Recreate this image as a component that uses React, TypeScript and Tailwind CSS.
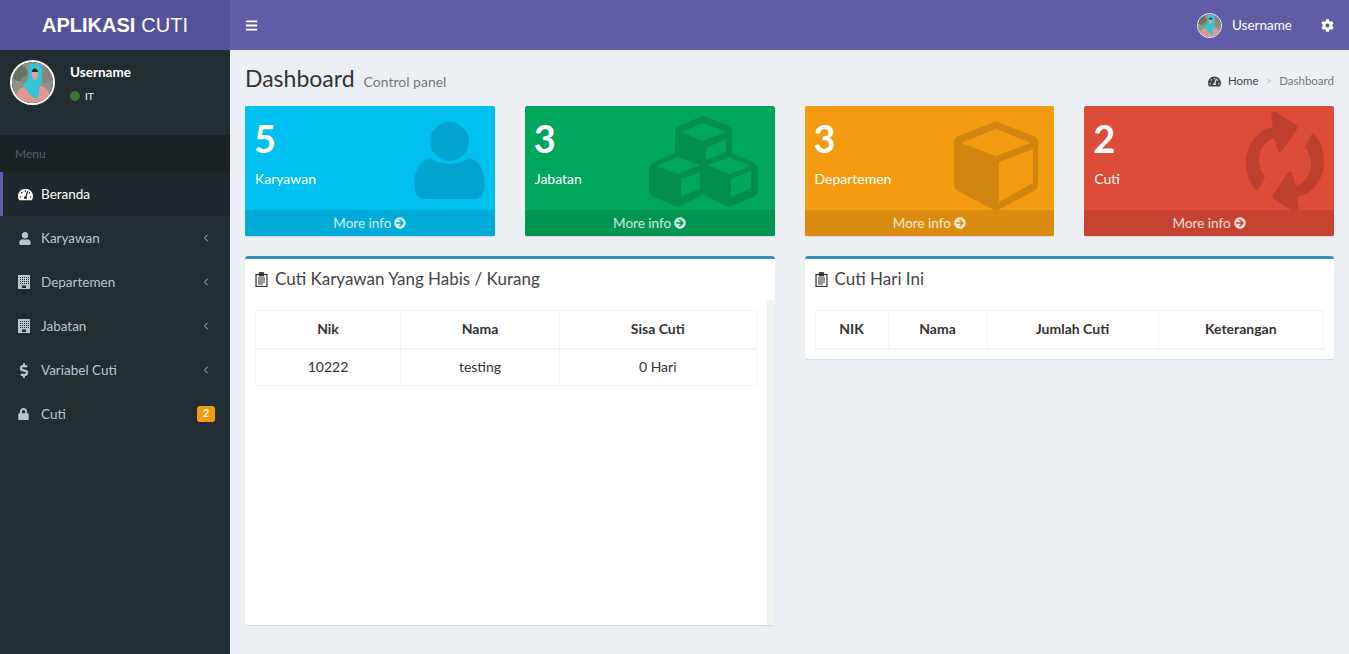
import React from "react";
import { FaBars, FaCog, FaUser, FaDollarSign, FaLock, FaArrowCircleRight, FaTachometerAlt } from "react-icons/fa";
import { ChevronLeft } from "lucide-react";

const Avatar = ({ className, id }: { className: string; id: string }) => (
  <svg viewBox="0 0 45 45" className={className}>
    <defs>
      <clipPath id={id}><circle cx="22.5" cy="22.5" r="22.5" /></clipPath>
    </defs>
    <g clipPath={`url(#${id})`}>
      <rect width="45" height="45" fill="#8f948a" />
      <circle cx="8" cy="12" r="9" fill="#65755f" />
      <circle cx="15" cy="20" r="5" fill="#7f8a74" />
      <circle cx="38" cy="14" r="9" fill="#8c827e" />
      <path d="M3 45 C4 34 7 29 14 27 L32 26 C39 28 42 34 43 45 Z" fill="#e2968f" />
      <path d="M20 2 L30 2 C33 6 34 11 33 15 C34 20 32 24 30 28 C30 33 29 37 28 41 C24 39 21 37 19 35 C17 31 14 28 12 25 C15 22 18 19 19 14 C18 9 19 5 20 2 Z" fill="#35c3d8" />
      <path d="M22 9 C24 7 28 8 28.500 11 C29 15 27 20 25 20 C23 20 21 15 22 9 Z" fill="#dca491" />
      <path d="M22 9 C24 6 28 7 28.500 11 L22 11 Z" fill="#2a2528" />
    </g>
  </svg>
);

const BuildingIcon = () => (
  <svg viewBox="0 0 12 14" className="w-[12px] h-[14px] mr-[11px] shrink-0" fill="currentColor" fillRule="evenodd">
    <path d="M0 0 H12 V14 H0 Z
    M2 2 H3 V3 H2 Z M4 2 H5 V3 H4 Z M6 2 H7 V3 H6 Z M8 2 H9 V3 H8 Z M10 2 H11 V3 H10 Z
    M2 4 H3 V5 H2 Z M4 4 H5 V5 H4 Z M6 4 H7 V5 H6 Z M8 4 H9 V5 H8 Z M10 4 H11 V5 H10 Z
    M2 6 H3 V7 H2 Z M4 6 H5 V7 H4 Z M6 6 H7 V7 H6 Z M8 6 H9 V7 H8 Z M10 6 H11 V7 H10 Z
    M2 8 H3 V9 H2 Z M4 8 H5 V9 H4 Z M6 8 H7 V9 H6 Z M8 8 H9 V9 H8 Z M10 8 H11 V9 H10 Z
    M4 10.500 H8 V13 H4 Z" />
  </svg>
);

const ClipboardIcon = () => (
  <svg viewBox="0 0 13 15" className="w-[13px] h-[15px] mr-[7px] shrink-0" fill="none" stroke="#333" strokeWidth="1.2">
    <rect x="1" y="2.500" width="11" height="12" />
    <rect x="4.500" y="0.800" width="4" height="3" fill="#333" />
    <path d="M3 6 H10 M3 8 H10 M3 10 H10 M3 12 H8" />
  </svg>
);

const menu = [
  { label: "Karyawan", icon: <FaUser className="w-[14px] text-[13px] mr-[9px] shrink-0" /> },
  { label: "Departemen", icon: <BuildingIcon /> },
  { label: "Jabatan", icon: <BuildingIcon /> },
  { label: "Variabel Cuti", icon: <FaDollarSign className="w-[12px] text-[15px] mr-[11px] shrink-0" /> },
];

const PersonIcon = () => (
  <svg viewBox="0 0 72 80" className="w-[71px] h-[78px]" fill="currentColor">
    <circle cx="36" cy="20" r="20" />
    <path d="M17 37 C24 45 48 45 55 37 C64 38 72 46 72 64 C72 74 68 79 60 79 L12 79 C4 79 0 74 0 64 C0 46 8 38 17 37 Z" />
  </svg>
);

const CubesIcon = () => (
  <svg viewBox="0 0 109 91" className="w-[109px] h-[91px]" fill="currentColor" fillRule="evenodd">
    <path d="M52 0.500 Q54 0 56 0.500 L79 10 Q83 12 83 15 L83 37 L105 47 Q109 49 109 53 L109 75 Q109 78 106 80 L83 90 Q80 91 77 90 L54 78 L32 90 Q29 91 26 90 L3 80 Q0 78 0 75 L0 53 Q0 49 4 47 L26 37 L26 15 Q26 12 30 10 Z
    M54 7 L32 16 L54 25 L77 16 Z
    M77 23 L57 32 L57 44 L77 36 Z
    M29 41 L7 50 L29 58 L51 49 Z
    M80 41 L59 49 L80 58 L102 50 Z
    M51 56 L32 63 L32 81 L51 72 Z
    M102 55 L82 63 L82 81 L102 72 Z" />
  </svg>
);

const BoxIcon = () => (
  <svg viewBox="0 0 84 88" className="w-[84px] h-[88px]" fill="currentColor" fillRule="evenodd">
    <path d="M38 1 Q42 -1 46 1 L80 14 Q84 16 84 20 L84 63 Q84 67 80 69 L46 87 Q42 89 38 87 L4 69 Q0 67 0 63 L0 20 Q0 16 4 14 Z
    M42 7 L7 21 L42 34 L77 21 Z
    M79 27 L45 40 L45 80 L79 61 Z" />
  </svg>
);

const RefreshIcon = () => (
  <svg viewBox="0 0 78 102" className="w-[78px] h-[102px]" fill="currentColor">
    <path d="M27 1 Q28 0 30 1 L50 14 Q52 16 51 18 L37 39 Q34 43 32 40 L28 27 C17 31 13 40 13 50 C13 55 15 60 19 66 L13 78 Q11 81 9 78 C3 71 0 61 0 51 C0 34 11 19 27 16 L25 4 Q25 2 27 1 Z" />
    <path d="M51 101 Q50 102 48 101 L28 88 Q26 86 27 84 L41 63 Q44 59 46 62 L50 75 C61 71 65 62 65 52 C65 47 63 42 59 36 L65 24 Q67 21 69 24 C75 31 78 41 78 51 C78 68 67 83 51 86 L53 98 Q53 100 51 101 Z" />
  </svg>
);

const stats = [
  { n: "5", label: "Karyawan", bg: "bg-[#00c0ef]", foot: "bg-[#00acd7]", icon: "text-[#00a5cf]", Icon: PersonIcon, wrap: "right-[10px] top-[16px]" },
  { n: "3", label: "Jabatan", bg: "bg-[#00a65a]", foot: "bg-[#009551]", icon: "text-[#008f4e]", Icon: CubesIcon, wrap: "right-[17px] top-[10px]" },
  { n: "3", label: "Departemen", bg: "bg-[#f39c12]", foot: "bg-[#da8c10]", icon: "text-[#d1860f]", Icon: BoxIcon, wrap: "right-[16px] top-[16px]" },
  { n: "2", label: "Cuti", bg: "bg-[#dd4b39]", foot: "bg-[#c64333]", icon: "text-[#be4031]", Icon: RefreshIcon, wrap: "right-[10px] top-[5px]" },
];

const Title = ({ children }: { children: React.ReactNode }) => (
  <div className="flex items-center h-[41px] px-[10px] text-[#444] text-[17px]">
    <ClipboardIcon />
    <span className="pb-[2px]">{children}</span>
  </div>
);

const th = "border border-b-2 border-[#f4f4f4] h-[38px] pb-[1px] font-bold text-center text-[14px] text-[#333]";
const td = "border border-[#f4f4f4] h-[37px] pb-[1px] text-center text-[14px] text-[#333]";

export default function App() {
  return (
    <div className="flex flex-col h-[654px] w-[1349px] overflow-hidden bg-[#ecf0f5] font-['Lato',sans-serif]">
      <header className="flex h-[50px] shrink-0 bg-[#605ca8] text-white">
        <div className="w-[230px] bg-[#555299] flex items-center justify-center text-[20px] font-['Liberation_Sans',sans-serif]">
          <b>APLIKASI</b><span className="ml-[6px]">CUTI</span>
        </div>
        <div className="flex-1 flex items-center">
          <FaBars className="ml-[15px] text-[13px]" />
          <div className="ml-auto flex items-center">
            <Avatar id="av1" className="w-[25px] h-[25px] rounded-full border border-white" />
            <span className="ml-[10px] text-[13.500px] w-[60px] whitespace-nowrap">Username</span>
            <FaCog className="ml-[29px] mr-[15px] text-[13px]" />
          </div>
        </div>
      </header>
      <div className="flex flex-1 min-h-0">
        <aside className="w-[230px] shrink-0 bg-[#222d32] text-[#b8c7ce]">
          <div className="h-[85px] flex items-start pt-[10px] pl-[10px]">
            <Avatar id="av2" className="w-[45px] h-[45px] rounded-full border-[2px] border-white" />
            <div className="ml-[15px] pt-[3px]">
              <div className="text-[13.500px] font-bold text-white leading-[18px]">Username</div>
              <div className="flex items-center mt-[6px] text-[10px] text-white leading-[18px]">
                <span className="w-[10px] h-[10px] rounded-full bg-[#3c763d] mr-[5px]" />IT
              </div>
            </div>
          </div>
          <div className="h-[37px] bg-[#1a2226] text-[#4b646f] text-[12px] flex items-center pl-[15px]">Menu</div>
          <div className="h-[44px] bg-[#1e282c] border-l-[3px] border-[#605ca8] text-white flex items-center text-[13.500px] pl-[15px]">
            <FaTachometerAlt className="w-[15px] mr-[8px] text-[15px]" /><span>Beranda</span>
          </div>
          {menu.map(({ label, icon }) => (
            <div key={label} className="h-[44px] flex items-center text-[13.500px] pl-[18px] pr-[18px]">
              {icon}
              <span>{label}</span>
              <ChevronLeft size={12} strokeWidth={2} className="ml-auto" />
            </div>
          ))}
          <div className="h-[44px] flex items-center text-[13.500px] pl-[18px] pr-[15px]">
            <FaLock className="w-[11px] text-[12px] mr-[12px]" />
            <span>Cuti</span>
            <span className="ml-auto bg-[#f39c12] text-white rounded-[3px] text-[10.500px] font-bold w-[18px] h-[16px] flex items-center justify-center">2</span>
          </div>
        </aside>
        <main className="flex-1 min-w-0">
          <div className="flex items-center h-[56px] px-[15px]">
            <h1 className="text-[23px] text-[#333] leading-[28px]">Dashboard</h1>
            <span className="ml-[9px] mt-[6px] text-[14px] text-[#777]">Control panel</span>
            <div className="ml-auto flex items-center text-[11.500px] mt-[6px]">
              <FaTachometerAlt className="text-[#444] mr-[7px] text-[13px]" />
              <span className="text-[#444]">Home</span>
              <span className="text-[#ccc] mx-[7px]">&gt;</span>
              <span className="text-[#777]">Dashboard</span>
            </div>
          </div>
          <div className="grid grid-cols-4 gap-x-[30px] px-[15px]">
            {stats.map((s) => (
              <div key={s.label} className={`relative h-[130px] rounded-[2px] overflow-hidden text-white shadow-[0_1px_1px_rgba(0,0,0,0.1)] ${s.bg}`}>
                <div className="h-[104px] pl-[10px] pt-[10px]">
                  <div className="text-[38px] font-bold leading-[44px] -ml-[1px]">{s.n}</div>
                  <div className="text-[14px] mt-[8px] leading-[22px]">{s.label}</div>
                </div>
                <div className={`absolute ${s.wrap} ${s.icon}`}><s.Icon /></div>
                <div className={`relative h-[26px] flex items-center justify-center text-[13.500px] text-white/80 ${s.foot}`}>
                  More info<FaArrowCircleRight className="ml-[3px] text-[12px]" />
                </div>
              </div>
            ))}
          </div>
          <div className="grid grid-cols-2 gap-x-[30px] px-[15px] mt-[20px] items-start">
            <section className="h-[369px] bg-white border-t-[3px] border-[#3c8dbc] rounded-[3px] shadow-[0_1px_1px_rgba(0,0,0,0.1)]">
              <Title>Cuti Karyawan Yang Habis / Kurang</Title>
              <div className="flex h-[325px]">
                <div className="flex-1 px-[10px] pt-[10px]">
                  <table className="w-full border-collapse table-fixed">
                    <thead>
                      <tr>
                        <th className={`${th} w-[145px]`}>Nik</th>
                        <th className={`${th} w-[159px]`}>Nama</th>
                        <th className={th}>Sisa Cuti</th>
                      </tr>
                    </thead>
                    <tbody>
                      <tr>
                        <td className={td}>10222</td>
                        <td className={td}>testing</td>
                        <td className={td}>0 Hari</td>
                      </tr>
                    </tbody>
                  </table>
                </div>
                <div className="w-[8px] bg-[#f1f1f1]" />
              </div>
            </section>
            <section className="h-[103px] bg-white border-t-[3px] border-[#3c8dbc] rounded-[3px] shadow-[0_1px_1px_rgba(0,0,0,0.1)]">
              <Title>Cuti Hari Ini</Title>
              <div className="px-[10px] pt-[10px]">
                <table className="w-full border-collapse table-fixed">
                  <thead>
                    <tr>
                      <th className={`${th} w-[73px]`}>NIK</th>
                      <th className={`${th} w-[99px]`}>Nama</th>
                      <th className={`${th} w-[171px]`}>Jumlah Cuti</th>
                      <th className={th}>Keterangan</th>
                    </tr>
                  </thead>
                </table>
              </div>
            </section>
          </div>
        </main>
      </div>
    </div>
  );
}
